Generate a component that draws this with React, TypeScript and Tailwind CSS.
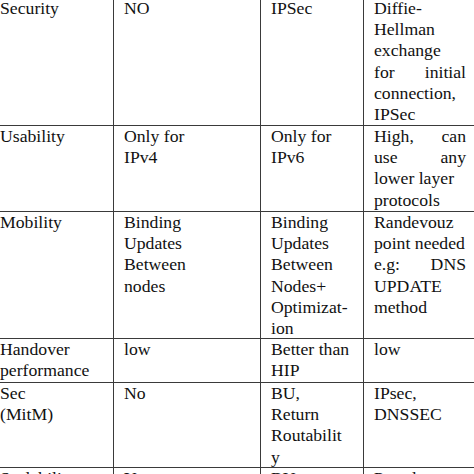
type Cell = { lines: string[]; justify?: number[] };

// each cell keeps its line breaks as printed in the source table
const rows: Cell[][] = [
  [
    { lines: ["Security"] },
    { lines: ["NO"] },
    { lines: ["IPSec"] },
    {
      lines: ["Diffie-", "Hellman", "exchange", "for initial", "connection,", "IPSec"],
      justify: [3],
    },
  ],
  [
    { lines: ["Usability"] },
    { lines: ["Only for", "IPv4"] },
    { lines: ["Only for", "IPv6"] },
    { lines: ["High, can", "use any", "lower layer", "protocols"], justify: [0, 1] },
  ],
  [
    { lines: ["Mobility"] },
    { lines: ["Binding", "Updates", "Between", "nodes"] },
    { lines: ["Binding", "Updates", "Between", "Nodes+", "Optimizat-", "ion"] },
    { lines: ["Randevouz", "point needed", "e.g: DNS", "UPDATE", "method"], justify: [2] },
  ],
  [
    { lines: ["Handover", "performance"] },
    { lines: ["low"] },
    { lines: ["Better than", "HIP"] },
    { lines: ["low"] },
  ],
  [
    { lines: ["Sec", "(MitM)"] },
    { lines: ["No"] },
    { lines: ["BU,", "Return", "Routabilit", "y"] },
    { lines: ["IPsec,", "DNSSEC"] },
  ],
  [
    { lines: ["Scalability"] },
    { lines: ["Yes"] },
    { lines: ["BU"] },
    { lines: ["Pseudo"] },
  ],
];

const pad = ["pl-[12px] pr-[4px]", "pl-[10px] pr-[4px]", "pl-[10px] pr-[4px]", "pl-[10px] pr-[8px]"];

export default function App() {
  return (
    <div className="w-[474px] h-[474px] overflow-hidden bg-white">
      <div
        className="grid grid-cols-[125px_146px_102px_110px] grid-rows-[127px_85px_126px_43px_84px_40px] gap-px bg-[#3a3a3a] ml-[-12px] mt-[-2px] text-[17.7px] leading-[21.2px] text-[#111111]"
        style={{ fontFamily: '"Liberation Serif", "Times New Roman", serif' }}
      >
        {rows.map((row, r) =>
          row.map((cell, c) => (
            <div key={`${r}-${c}`} className={`bg-white ${pad[c]}`}>
              {cell.lines.map((line, i) => (
                <div
                  key={i}
                  className={
                    cell.justify?.includes(i)
                      ? "whitespace-nowrap text-justify [text-align-last:justify]"
                      : "whitespace-nowrap"
                  }
                >
                  {line}
                </div>
              ))}
            </div>
          ))
        )}
      </div>
    </div>
  );
}
